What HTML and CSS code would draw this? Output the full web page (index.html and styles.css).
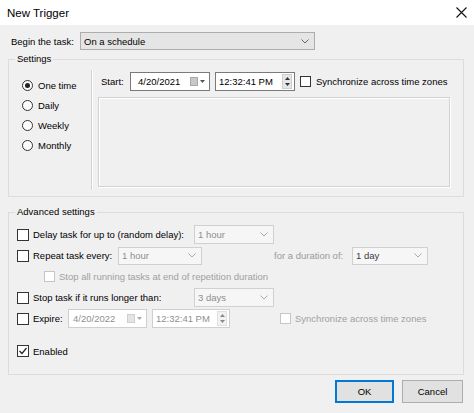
FILE: index.html
```html
<!DOCTYPE html>
<html>
<head>
<meta charset="utf-8">
<link rel="stylesheet" href="styles.css">
</head>
<body>
<div class="window">
  <div class="titlebar">
    <span class="title">New Trigger</span>
    <svg class="close" width="11" height="11" viewBox="0 0 11 11"><path d="M0.5 0.5 L10.5 10.5 M10.5 0.5 L0.5 10.5" stroke="#111" stroke-width="1.1" fill="none"/></svg>
  </div>
  <div class="begin-row">
    <span class="begin-label">Begin the task:</span>
    <div class="combo combo-main">
      <span class="combo-text">On a schedule</span>
      <svg class="chev" width="8" height="5" viewBox="0 0 8 5"><polyline points="0.5,0.5 4,4 7.5,0.5" fill="none" stroke="#666" stroke-width="1"/></svg>
    </div>
  </div>

  <fieldset class="group settings">
    <legend>Settings</legend>
    <div class="settings-inner">
      <div class="radios">
        <div class="radio-row"><span class="radio checked"></span><span>One time</span></div>
        <div class="radio-row"><span class="radio"></span><span>Daily</span></div>
        <div class="radio-row"><span class="radio"></span><span>Weekly</span></div>
        <div class="radio-row"><span class="radio"></span><span>Monthly</span></div>
      </div>
      <div class="vsep"></div>
      <div class="schedule">
        <div class="start-row">
          <span class="start-label">Start:</span>
          <div class="field date">
            <span class="field-text">4/20/2021</span>
            <span class="cal"><span class="cal-box"></span><svg width="5" height="3" viewBox="0 0 5 3"><path d="M0 0 H5 L2.5 3 Z" fill="#555"/></svg></span>
          </div>
          <div class="field time">
            <span class="field-text">12:32:41 PM</span>
            <span class="spin"><svg width="5" height="3" viewBox="0 0 5 3"><path d="M0 3 H5 L2.5 0 Z" fill="#333"/></svg><svg width="5" height="3" viewBox="0 0 5 3"><path d="M0 0 H5 L2.5 3 Z" fill="#333"/></svg></span>
          </div>
          <span class="check sync-check"></span>
          <span class="sync-text">Synchronize across time zones</span>
        </div>
        <div class="panel"></div>
      </div>
    </div>
  </fieldset>

  <fieldset class="group advanced">
    <legend>Advanced settings</legend>
    <div class="adv-inner">
      <div class="adv-row">
        <span class="cb-label w-delay"><span class="check"></span><span>Delay task for up to (random delay):</span></span>
        <div class="combo dis w80"><span class="combo-text">1 hour</span><svg class="chev" width="8" height="5" viewBox="0 0 8 5"><polyline points="0.5,0.5 4,4 7.5,0.5" fill="none" stroke="#aaa" stroke-width="1"/></svg></div>
      </div>
      <div class="adv-row">
        <span class="cb-label w-repeat"><span class="check"></span><span>Repeat task every:</span></span>
        <div class="combo dis w84 h18"><span class="combo-text">1 hour</span><svg class="chev" width="8" height="5" viewBox="0 0 8 5"><polyline points="0.5,0.5 4,4 7.5,0.5" fill="none" stroke="#aaa" stroke-width="1"/></svg></div>
        <span class="duration-label">for a duration of:</span>
        <div class="combo dis w76 h18 dark"><span class="combo-text">1 day</span><svg class="chev" width="8" height="5" viewBox="0 0 8 5"><polyline points="0.5,0.5 4,4 7.5,0.5" fill="none" stroke="#aaa" stroke-width="1"/></svg></div>
      </div>
      <div class="adv-row indent">
        <span class="check dis-check"></span><span class="dis-text">Stop all running tasks at end of repetition duration</span>
      </div>
      <div class="adv-row">
        <span class="cb-label w-delay"><span class="check"></span><span>Stop task if it runs longer than:</span></span>
        <div class="combo dis w80"><span class="combo-text">3 days</span><svg class="chev" width="8" height="5" viewBox="0 0 8 5"><polyline points="0.5,0.5 4,4 7.5,0.5" fill="none" stroke="#aaa" stroke-width="1"/></svg></div>
      </div>
      <div class="adv-row">
        <span class="cb-label w-expire"><span class="check"></span><span>Expire:</span></span>
        <div class="field date dis-field w79">
          <span class="field-text">4/20/2022</span>
          <span class="cal"><span class="cal-box light"></span><svg width="5" height="3" viewBox="0 0 5 3"><path d="M0 0 H5 L2.5 3 Z" fill="#aaa"/></svg></span>
        </div>
        <div class="field time dis-field w78">
          <span class="field-text">12:32:41 PM</span>
          <span class="spin light"><svg width="5" height="3" viewBox="0 0 5 3"><path d="M0 3 H5 L2.5 0 Z" fill="#888"/></svg><svg width="5" height="3" viewBox="0 0 5 3"><path d="M0 0 H5 L2.5 3 Z" fill="#888"/></svg></span>
        </div>
        <span class="check dis-check exp-sync"></span><span class="dis-text">Synchronize across time zones</span>
      </div>
      <div class="adv-row enabled-row">
        <span class="cb-label"><span class="check checked"><svg width="10" height="10" viewBox="0 0 10 10"><polyline points="1.5,5 4,7.5 8.5,2" fill="none" stroke="#222" stroke-width="1.2"/></svg></span><span>Enabled</span></span>
      </div>
    </div>
  </fieldset>

  <div class="buttons">
    <div class="btn default">OK</div>
    <div class="btn">Cancel</div>
  </div>
</div>
</body>
</html>
```

FILE: styles.css
```css
* { box-sizing: border-box; }
html, body { margin: 0; padding: 0; }
body {
  background: #f0f0f0;
  font-family: "Liberation Sans", Arial, sans-serif;
  font-size: 9.5px;
  color: #000;
  white-space: nowrap;
}
.window { width: 474px; height: 413px; overflow: hidden; }

.titlebar {
  height: 25px;
  background: #fff;
  display: flex;
  align-items: center;
  justify-content: space-between;
  padding: 0 7px;
}
.title { font-size: 11.5px; }

.begin-row {
  display: flex;
  align-items: center;
  margin-top: 7px;
  padding-left: 11px;
  height: 18px;
}
.begin-label { width: 69px; }

.combo {
  display: flex;
  align-items: center;
  justify-content: space-between;
  height: 19px;
  padding: 0 5px 0 3px;
  background: #f6f6f6;
  border: 1px solid #d0d0d0;
}
.combo-main {
  width: 235px;
  height: 18px;
  background: #e5e5e5;
  border-color: #adadad;
}
.combo.dis .combo-text { color: #8e8e8e; }
.combo.dark .combo-text { color: #3c3c3c; }
.w80 { width: 80px; }
.w84 { width: 84px; }
.w76 { width: 76px; }
.h18 { height: 18px; }

.group {
  margin: 1px 0 0 8px;
  width: 456px;
  border: 1px solid #dcdcdc;
  padding: 0;
}
.group legend {
  margin-left: 6px;
  padding: 0 2px;
  line-height: 16px;
  height: 16px;
}

.settings { padding-bottom: 6px; }
.settings-inner {
  display: flex;
  padding-top: 3px;
  height: 123px;
}
.radios {
  width: 82px;
  padding: 5px 0 0 13px;
}
.radio-row {
  display: flex;
  align-items: center;
  height: 20px;
}
.radio {
  width: 11px;
  height: 11px;
  border: 1px solid #333;
  border-radius: 50%;
  margin-right: 5px;
  display: flex;
  align-items: center;
  justify-content: center;
  background: #fff;
}
.radio.checked::after {
  content: "";
  width: 5px;
  height: 5px;
  border-radius: 50%;
  background: #222;
}
.vsep {
  width: 2px;
  height: 120px;
  background: linear-gradient(to right, #d2d2d2 50%, #fff 50%);
}
.schedule {
  padding-left: 5px;
  display: flex;
  flex-direction: column;
}
.start-row {
  display: flex;
  align-items: center;
  height: 19px;
  margin-top: 2px;
}
.start-label { width: 32px; padding-left: 3px; }

.field {
  display: flex;
  align-items: center;
  justify-content: space-between;
  height: 19px;
  background: #fff;
  border: 1px solid #7a7a7a;
}
.field.date { width: 80px; padding: 0 4px 0 7px; }
.field.time { width: 80px; margin-left: 5px; padding: 0 2px 0 3px; }
.dis-field { border-color: #cfcfcf; }
.dis-field .field-text { color: #909090; }
.field.date.w79 { width: 79px; padding-left: 4px; }
.field.time.w78 { width: 78px; }

.cal { display: flex; align-items: center; gap: 2px; }
.cal-box {
  width: 8px;
  height: 9px;
  background: #c8c8c8;
  border: 1px solid #a8a8a8;
}
.cal-box.light { background: #e4e4e4; border-color: #cfcfcf; }
.spin {
  width: 10px;
  height: 15px;
  background: #e6e6e6;
  border: 1px solid #cfcfcf;
  display: flex;
  flex-direction: column;
  align-items: center;
  justify-content: space-around;
}
.spin.light { background: #f2f2f2; border-color: #e0e0e0; }

.check {
  width: 12px;
  height: 12px;
  border: 1px solid #333;
  background: #fff;
  margin-right: 4px;
  flex-shrink: 0;
  display: flex;
  align-items: center;
  justify-content: center;
}
.sync-check { width: 11px; height: 11px; margin-left: 5px; margin-right: 5px; }
.dis-check { width: 11px; height: 11px; border-color: #c6c6c6; }
.dis-text { color: #a0a0a0; }

.panel {
  margin-top: 6px;
  width: 352px;
  height: 90px;
  border: 1px solid #d2d2d2;
  box-shadow: 1px 1px 0 #fff, inset 1px 1px 0 #fff;
}

.advanced { margin-top: 7px; padding-bottom: 13px; }
.adv-inner { padding: 4px 0 0 8px; }
.adv-row {
  display: flex;
  align-items: center;
  height: 21px;
}
.cb-label { display: flex; align-items: center; }
.w-delay { width: 177px; }
.w-repeat { width: 101px; }
.w-expire { width: 51px; }
.duration-label { margin-left: 72px; width: 78px; color: #9a9a9a; }
.indent { padding-left: 27px; }
.exp-sync { margin-left: 50px; }
.enabled-row { margin-top: 12px; height: 20px; }

.buttons {
  display: flex;
  justify-content: flex-end;
  gap: 8px;
  padding-right: 11px;
  margin-top: 5px;
}
.btn {
  width: 61px;
  height: 23px;
  background: #e1e1e1;
  border: 1px solid #adadad;
  display: flex;
  align-items: center;
  justify-content: center;
}
.btn.default {
  width: 59px;
  border: 2px solid #0078d7;
}
```
